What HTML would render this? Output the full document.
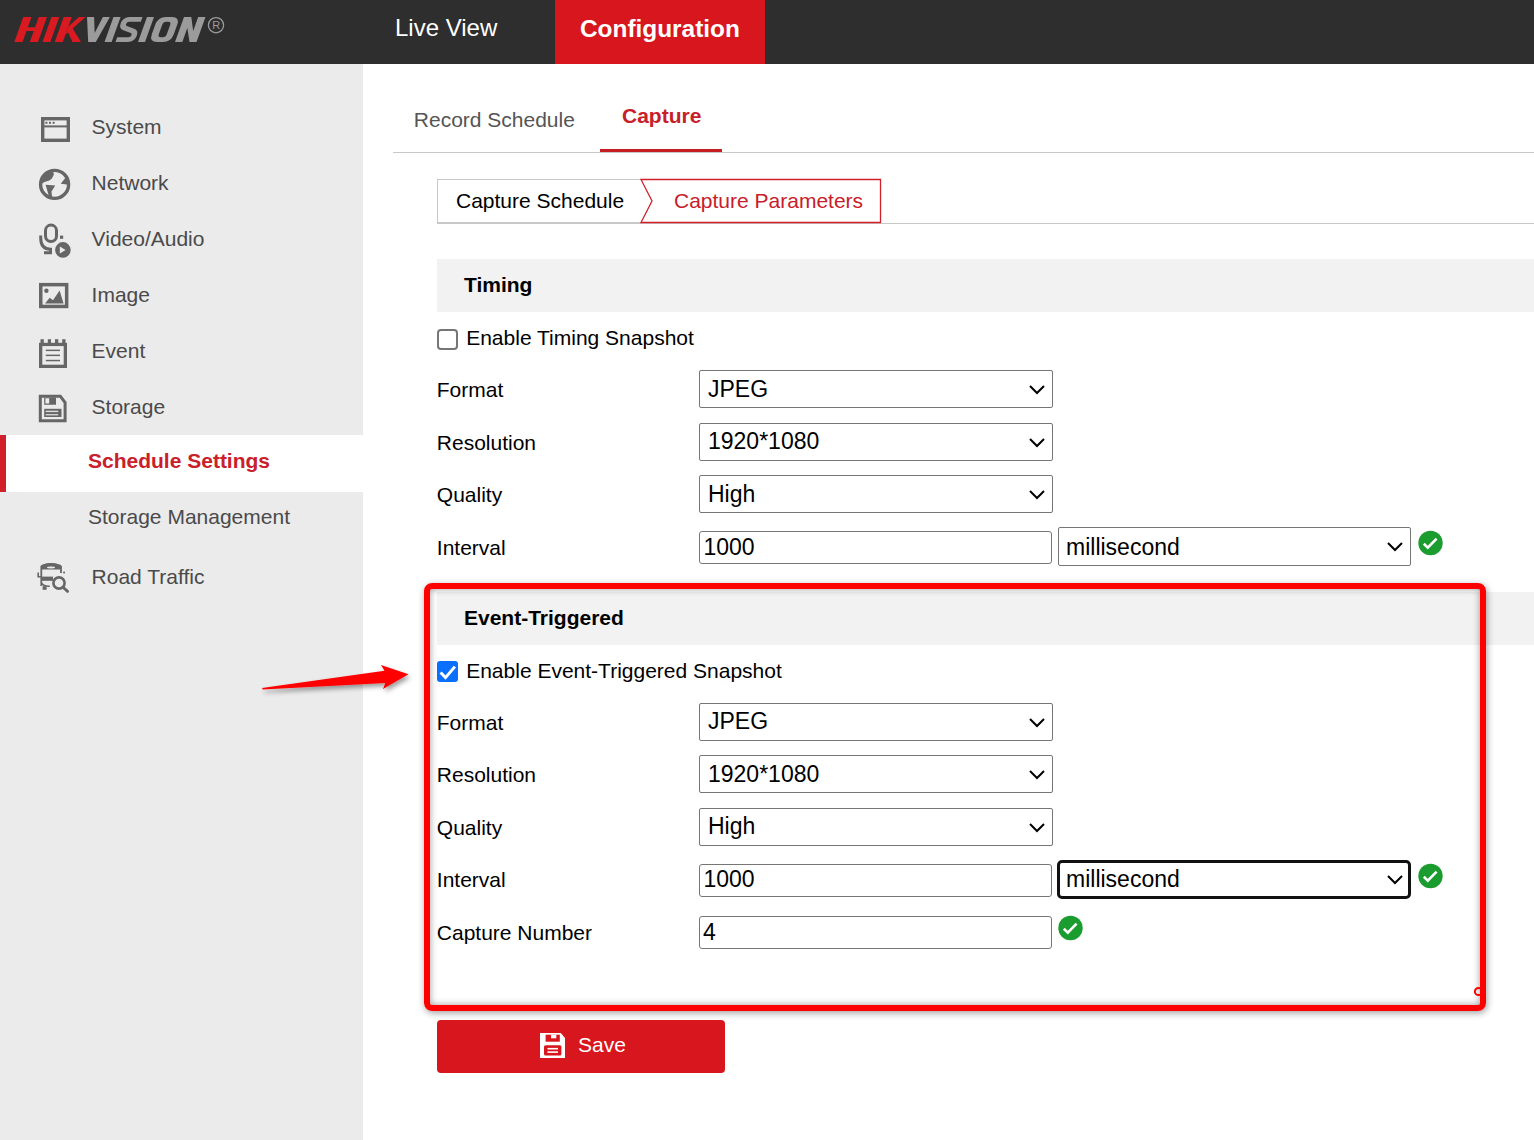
<!DOCTYPE html><html><head><meta charset="utf-8"><style>
html,body{margin:0;padding:0;}
body{width:1534px;height:1140px;overflow:hidden;position:relative;background:#fff;font-family:"Liberation Sans", sans-serif;}
.t{position:absolute;white-space:nowrap;line-height:1.117em;}
.r{position:absolute;box-sizing:border-box;}
svg{position:absolute;overflow:visible;}
</style></head><body>
<div class="r" style="left:0px;top:0px;width:1534px;height:64px;background:#2e2e2e"></div>
<div class="r" style="left:555px;top:0px;width:210px;height:64px;background:#d7161e"></div>
<svg style="left:0;top:0" width="240" height="64" viewBox="0 0 240 64">
<g transform="matrix(1 0 -0.36 1 15.12 0)">
<g fill="#da1a21">
<path d="M14.3,17 H22.5 V27.2 H29.8 V17 H38 V42 H29.8 V31 H22.5 V42 H14.3 Z"/>
<rect x="42.5" y="17" width="7.8" height="25"/>
<rect x="54.7" y="17" width="8.1" height="25"/>
<path d="M62.8,26.5 L69.8,17 L76.5,17 L67.8,28.5 L81,42 L72.4,42 L64.8,32.5 L62.8,34.5 Z"/>
</g>
<g fill="#9b9b9b">
<path d="M78,17 L85.1,17 L91.4,33 L93.9,17 L100.9,17 L95.8,42 L88.2,42 Z"/>
<rect x="104.5" y="17" width="7.1" height="25"/>
<path d="M133.5,17 L120.5,17 Q114,17 114,23.5 Q114,28.5 119,30.2 L127.5,33 Q129,33.6 129,35 Q129,37.3 126.5,37.3 L115.5,37.3 L115.5,42 L128,42 Q134.5,42 134.5,35.5 Q134.5,30.5 129.5,28.8 L121,26 Q119.6,25.5 119.6,24 Q119.6,21.7 122,21.7 L133.5,21.7 Z"/>
<rect x="138" y="17" width="7" height="25"/>
<path fill-rule="evenodd" d="M157,17 L163,17 Q171,17 171,25 L171,34 Q171,42 163,42 L157,42 Q149,42 149,34 L149,25 Q149,17 157,17 Z M159,21.7 Q156,21.7 156,25 L156,34 Q156,37.3 159,37.3 L161,37.3 Q164,37.3 164,34 L164,25 Q164,21.7 161,21.7 Z"/>
<path d="M175,17 L182.3,17 L189.2,31 L189.2,17 L196.5,17 L196.5,42 L189.5,42 L182.3,28 L182.3,42 L175,42 Z"/>
</g>
</g>
<circle cx="216" cy="25.2" r="7.6" fill="none" stroke="#9b9b9b" stroke-width="1.3"/>
<text x="216.2" y="29.3" font-family="Liberation Sans" font-size="11" fill="#9b9b9b" text-anchor="middle">R</text>
</svg>
<div class="t" style="left:395px;top:15.28px;font-size:24px;color:#fff;font-weight:normal;">Live View</div>
<div class="t" style="left:580px;top:14.92px;font-size:24.4px;color:#fff;font-weight:bold;">Configuration</div>
<div class="r" style="left:0px;top:64px;width:363px;height:1076px;background:#ebebeb"></div>
<div class="r" style="left:0px;top:435px;width:363px;height:57px;background:#fff"></div>
<div class="r" style="left:0px;top:435px;width:6px;height:57px;background:#d0202a"></div>
<div class="t" style="left:91.6px;top:115.00px;font-size:21px;color:#4a4a4a;font-weight:normal;">System</div>
<div class="t" style="left:91.6px;top:171.00px;font-size:21px;color:#4a4a4a;font-weight:normal;">Network</div>
<div class="t" style="left:91.6px;top:227.00px;font-size:21px;color:#4a4a4a;font-weight:normal;">Video/Audio</div>
<div class="t" style="left:91.6px;top:283.00px;font-size:21px;color:#4a4a4a;font-weight:normal;">Image</div>
<div class="t" style="left:91.6px;top:339.00px;font-size:21px;color:#4a4a4a;font-weight:normal;">Event</div>
<div class="t" style="left:91.6px;top:395.00px;font-size:21px;color:#4a4a4a;font-weight:normal;">Storage</div>
<div class="t" style="left:88px;top:448.50px;font-size:21px;color:#c9202a;font-weight:bold;">Schedule Settings</div>
<div class="t" style="left:88px;top:505.29px;font-size:21px;color:#4a4a4a;font-weight:normal;">Storage Management</div>
<div class="t" style="left:91.6px;top:565.00px;font-size:21px;color:#4a4a4a;font-weight:normal;">Road Traffic</div>
<svg style="left:0;top:0" width="100" height="620" viewBox="0 0 100 620">
<g fill="none" stroke="#666">
<rect x="42.7" y="118.7" width="25.6" height="21.6" stroke-width="3.4"/>
<line x1="44" y1="126.4" x2="67" y2="126.4" stroke-width="2"/>
</g>
<g fill="#666">
<rect x="45.4" y="121.8" width="2" height="2"/><rect x="49" y="121.8" width="2" height="2"/><rect x="52.6" y="121.8" width="2" height="2"/>
</g>
<!-- network globe -->
<circle cx="54.6" cy="184.4" r="14" fill="none" stroke="#666" stroke-width="3.4"/>
<g fill="#666">
<path d="M44,174 Q48,170.5 52.8,170.6 L53.9,174.5 L51.9,178.4 L49.3,180.6 L44.5,181.9 L41.2,184 L41,178 Z"/>
<path d="M45.6,184.8 L55.2,185.6 L51.4,191.8 L52.2,197 L49,196.6 Z"/>
<path d="M60.7,183.7 L65.1,178.2 L67.5,177.5 Q68.8,181 68.8,184.8 Z"/>
</g>
<!-- video/audio -->
<g fill="none" stroke="#666" stroke-width="3">
<rect x="45.5" y="225.1" width="11" height="16.4" rx="5.5"/>
<path d="M40.7,235.4 L40.7,238 Q40.7,249.2 50.5,249.2 L50.5,252.8 L44,252.8"/>
</g>
<rect x="60" y="235.6" width="3.2" height="3.2" fill="#666"/>
<circle cx="62.9" cy="249.9" r="8.6" fill="#666" stroke="#ebebeb" stroke-width="1.6"/>
<path d="M59.8,246.6 L59.8,253.4 L65.6,250 Z" fill="#ebebeb"/>
<!-- image -->
<rect x="40.75" y="284.65" width="25.9" height="21.8" fill="none" stroke="#666" stroke-width="3.5"/>
<circle cx="46.4" cy="290.8" r="2.2" fill="#666"/>
<path d="M45,303.6 L49.7,297.8 L53,300.2 L59.6,290.6 L63.6,303.6 Z" fill="#666"/>
<!-- event -->
<rect x="40.65" y="344.45" width="24.7" height="21.9" fill="none" stroke="#666" stroke-width="3.3"/>
<g fill="#666">
<rect x="40.5" y="339.2" width="3.3" height="4"/><rect x="47.8" y="339.2" width="3.2" height="4"/><rect x="55" y="339.2" width="3.3" height="4"/><rect x="62.2" y="339.2" width="3.3" height="4"/>
<rect x="45.8" y="349.6" width="14.2" height="1.5"/><rect x="45.8" y="354.6" width="14.2" height="1.5"/><rect x="45.8" y="359.8" width="14.2" height="1.5"/>
</g>
<!-- storage -->
<path d="M40.3,396.2 L60.3,396.2 L65.1,402.6 L65.1,420.7 L40.3,420.7 Z" fill="none" stroke="#666" stroke-width="3"/>
<path fill-rule="evenodd" fill="#666" d="M44.2,397.5 L56,397.5 L56,404.8 L44.2,404.8 Z M45.4,398.2 L45.4,403.6 L49.2,403.6 L49.2,398.2 Z"/>
<rect x="44.2" y="408.8" width="17.3" height="8.2" fill="#666"/>
<rect x="45.7" y="410.7" width="12.5" height="1.4" fill="#ddd"/>
<rect x="45.7" y="414.1" width="12.5" height="1.3" fill="#ddd"/>
<!-- road traffic -->
<g fill="none" stroke="#666">
<path d="M41.3,586 L41.3,566.5 Q51,561.5 61,566.5 L61,573" stroke-width="1.8"/>
<path d="M38.2,572.5 L38.2,576.8 L41.3,576.8" stroke-width="1.6"/>
<path d="M41.3,583 Q44,586.6 49.8,586.2" stroke-width="1.6"/>
<circle cx="59" cy="583" r="5.6" stroke-width="2.6"/>
<path d="M63,587.3 L67.6,591.4" stroke-width="2.8" stroke-linecap="round"/>
</g>
<g fill="#666">
<path d="M41.3,565 Q51,561 61,565 L61,569.6 L41.3,569.6 Z"/>
<rect x="42" y="576.6" width="11" height="4.2"/>
<rect x="42.6" y="586.2" width="4" height="3.6"/>
<rect x="63.2" y="571.6" width="1.8" height="1.8"/>
</g>
<ellipse cx="51" cy="567.5" rx="4" ry="0.9" fill="#ebebeb"/>
</svg>
<div class="t" style="left:413.8px;top:107.50px;font-size:21px;color:#555;font-weight:normal;">Record Schedule</div>
<div class="t" style="left:622px;top:104.00px;font-size:21px;color:#c8202a;font-weight:bold;">Capture</div>
<div class="r" style="left:393px;top:152px;width:1141px;height:1px;background:#c8c8c8"></div>
<div class="r" style="left:600px;top:149px;width:122px;height:3px;background:#c71d25"></div>
<div class="r" style="left:437px;top:223px;width:1097px;height:1px;background:#c8c8c8"></div>
<div class="r" style="left:437px;top:222px;width:205px;height:1px;background:#c8c8c8"></div>
<div class="r" style="left:437px;top:179px;width:205px;height:44px;border:1px solid #c8c8c8;border-right:none;border-bottom:none"></div>
<svg style="left:0;top:0" width="1534" height="300" viewBox="0 0 1534 300">
<path d="M641,179.5 L880.5,179.5 L880.5,222.5 L641,222.5 L652,201 Z" fill="#fff" stroke="#d0202a" stroke-width="1.3"/>
</svg>
<div class="t" style="left:456px;top:188.59px;font-size:21px;color:#000;font-weight:normal;">Capture Schedule</div>
<div class="t" style="left:674px;top:188.59px;font-size:21px;color:#c8202a;font-weight:normal;">Capture Parameters</div>
<div class="r" style="left:437px;top:259px;width:1097px;height:53px;background:#f2f2f2"></div>
<div class="t" style="left:464px;top:273.19px;font-size:21px;color:#000;font-weight:bold;">Timing</div>
<div class="r" style="left:437px;top:329px;width:21px;height:21px;border:2px solid #767676;border-radius:4px;background:#fff"></div>
<div class="t" style="left:466.2px;top:326.00px;font-size:21px;color:#000;font-weight:normal;">Enable Timing Snapshot</div>
<div class="t" style="left:436.8px;top:378.00px;font-size:21px;color:#000;font-weight:normal;">Format</div>
<div class="t" style="left:436.8px;top:430.69px;font-size:21px;color:#000;font-weight:normal;">Resolution</div>
<div class="t" style="left:436.8px;top:483.30px;font-size:21px;color:#000;font-weight:normal;">Quality</div>
<div class="t" style="left:436.8px;top:535.79px;font-size:21px;color:#000;font-weight:normal;">Interval</div>
<div class="r" style="left:699px;top:370px;width:354px;height:38px;border:1px solid #767676;border-radius:2px;background:#fff"></div>
<div class="t" style="left:708px;top:376.79px;font-size:23px;color:#000;font-weight:normal;">JPEG</div>
<svg style="left:1029px;top:385px" width="16" height="9" viewBox="0 0 16 9"><path d="M1,1 L8,8 L15,1" fill="none" stroke="#000" stroke-width="2"/></svg>
<div class="r" style="left:699px;top:422.5px;width:354px;height:38px;border:1px solid #767676;border-radius:2px;background:#fff"></div>
<div class="t" style="left:708px;top:429.29px;font-size:23px;color:#000;font-weight:normal;">1920*1080</div>
<svg style="left:1029px;top:437.5px" width="16" height="9" viewBox="0 0 16 9"><path d="M1,1 L8,8 L15,1" fill="none" stroke="#000" stroke-width="2"/></svg>
<div class="r" style="left:699px;top:475px;width:354px;height:38px;border:1px solid #767676;border-radius:2px;background:#fff"></div>
<div class="t" style="left:708px;top:481.79px;font-size:23px;color:#000;font-weight:normal;">High</div>
<svg style="left:1029px;top:490px" width="16" height="9" viewBox="0 0 16 9"><path d="M1,1 L8,8 L15,1" fill="none" stroke="#000" stroke-width="2"/></svg>
<div class="r" style="left:699px;top:531px;width:353px;height:33px;border:1px solid #767676;border-radius:3px;background:#fff"></div>
<div class="t" style="left:703.5px;top:534.78px;font-size:23px;color:#000;font-weight:normal;">1000</div>
<div class="r" style="left:1058px;top:527px;width:353px;height:39px;border:1px solid #767676;border-radius:2px;background:#fff"></div>
<div class="t" style="left:1066px;top:534.78px;font-size:23px;color:#000;font-weight:normal;">millisecond</div>
<svg style="left:1387px;top:542px" width="16" height="9" viewBox="0 0 16 9"><path d="M1,1 L8,8 L15,1" fill="none" stroke="#000" stroke-width="2"/></svg>
<svg style="left:1418px;top:531px" width="25" height="24" viewBox="0 0 25 24"><circle cx="12.5" cy="12" r="12.2" fill="#1a9c2e"/><path d="M5.8,12.8 L9.8,16.6 L18.6,7.6" fill="none" stroke="#fff" stroke-width="2.6"/></svg>
<div class="r" style="left:437px;top:591.5px;width:1097px;height:53px;background:#f2f2f2"></div>
<div class="t" style="left:464px;top:605.70px;font-size:21px;color:#000;font-weight:bold;">Event-Triggered</div>
<svg style="left:437px;top:661.0px" width="21" height="21" viewBox="0 0 21 21"><rect x="0" y="0" width="21" height="21" rx="3" fill="#0b6ffe"/><path d="M3.6,11.5 L8.5,16.6 L17.9,5.6" fill="none" stroke="#fff" stroke-width="3"/></svg>
<div class="t" style="left:466.2px;top:658.50px;font-size:21px;color:#000;font-weight:normal;">Enable Event-Triggered Snapshot</div>
<div class="t" style="left:436.8px;top:710.50px;font-size:21px;color:#000;font-weight:normal;">Format</div>
<div class="t" style="left:436.8px;top:763.20px;font-size:21px;color:#000;font-weight:normal;">Resolution</div>
<div class="t" style="left:436.8px;top:815.79px;font-size:21px;color:#000;font-weight:normal;">Quality</div>
<div class="t" style="left:436.8px;top:868.29px;font-size:21px;color:#000;font-weight:normal;">Interval</div>
<div class="r" style="left:699px;top:702.5px;width:354px;height:38px;border:1px solid #767676;border-radius:2px;background:#fff"></div>
<div class="t" style="left:708px;top:709.28px;font-size:23px;color:#000;font-weight:normal;">JPEG</div>
<svg style="left:1029px;top:717.5px" width="16" height="9" viewBox="0 0 16 9"><path d="M1,1 L8,8 L15,1" fill="none" stroke="#000" stroke-width="2"/></svg>
<div class="r" style="left:699px;top:755.0px;width:354px;height:38px;border:1px solid #767676;border-radius:2px;background:#fff"></div>
<div class="t" style="left:708px;top:761.78px;font-size:23px;color:#000;font-weight:normal;">1920*1080</div>
<svg style="left:1029px;top:770.0px" width="16" height="9" viewBox="0 0 16 9"><path d="M1,1 L8,8 L15,1" fill="none" stroke="#000" stroke-width="2"/></svg>
<div class="r" style="left:699px;top:807.5px;width:354px;height:38px;border:1px solid #767676;border-radius:2px;background:#fff"></div>
<div class="t" style="left:708px;top:814.28px;font-size:23px;color:#000;font-weight:normal;">High</div>
<svg style="left:1029px;top:822.5px" width="16" height="9" viewBox="0 0 16 9"><path d="M1,1 L8,8 L15,1" fill="none" stroke="#000" stroke-width="2"/></svg>
<div class="r" style="left:699px;top:863.5px;width:353px;height:33px;border:1px solid #767676;border-radius:3px;background:#fff"></div>
<div class="t" style="left:703.5px;top:867.28px;font-size:23px;color:#000;font-weight:normal;">1000</div>
<div class="r" style="left:1057px;top:859.5px;width:354px;height:39px;border:3px solid #111;border-radius:5px;background:#fff"></div>
<div class="t" style="left:1066px;top:867.28px;font-size:23px;color:#000;font-weight:normal;">millisecond</div>
<svg style="left:1387px;top:874.5px" width="16" height="9" viewBox="0 0 16 9"><path d="M1,1 L8,8 L15,1" fill="none" stroke="#000" stroke-width="2"/></svg>
<svg style="left:1418px;top:863.5px" width="25" height="24" viewBox="0 0 25 24"><circle cx="12.5" cy="12" r="12.2" fill="#1a9c2e"/><path d="M5.8,12.8 L9.8,16.6 L18.6,7.6" fill="none" stroke="#fff" stroke-width="2.6"/></svg>
<div class="t" style="left:436.8px;top:921.39px;font-size:21px;color:#000;font-weight:normal;">Capture Number</div>
<div class="r" style="left:699px;top:916px;width:353px;height:33px;border:1px solid #767676;border-radius:3px;background:#fff"></div>
<div class="t" style="left:703px;top:920.38px;font-size:23px;color:#000;font-weight:normal;">4</div>
<svg style="left:1058px;top:916px" width="25" height="24" viewBox="0 0 25 24"><circle cx="12.5" cy="12" r="12.2" fill="#1a9c2e"/><path d="M5.8,12.8 L9.8,16.6 L18.6,7.6" fill="none" stroke="#fff" stroke-width="2.6"/></svg>
<div class="r" style="left:424px;top:583px;width:1062px;height:428px;border:6px solid #ff0000;border-radius:8px;box-shadow:1px 2px 7px rgba(0,0,0,0.38), inset 0 0 7px rgba(0,0,0,0.4)"></div>
<svg style="left:0;top:0" width="1534" height="1140" viewBox="0 0 1534 1140"><circle cx="1478.5" cy="991.5" r="3.6" fill="none" stroke="#f00" stroke-width="2"/></svg>
<svg style="left:0;top:0" width="1534" height="1140" viewBox="0 0 1534 1140">
<defs><filter id="sh" x="-20%" y="-50%" width="140%" height="200%"><feGaussianBlur in="SourceAlpha" stdDeviation="2.5"/><feOffset dx="2" dy="3"/><feComponentTransfer><feFuncA type="linear" slope="0.4"/></feComponentTransfer><feMerge><feMergeNode/><feMergeNode in="SourceGraphic"/></feMerge></filter></defs>
<path filter="url(#sh)" d="M262,688 L384.5,670.8 L381,665 L408.5,674.2 L383,689 L385.3,683 L262.8,689.6 Z" fill="#ff0000"/>
</svg>
<div class="r" style="left:437px;top:1020px;width:288px;height:53px;background:#d7161e;border-radius:4px"></div>
<svg style="left:540px;top:1033px" width="25" height="25" viewBox="0 0 25 25">
<path d="M0,0 L20.7,0 L25,5 L25,25 L0,25 Z" fill="#fff"/>
<rect x="5.6" y="1.7" width="14.2" height="7" fill="#d7161e"/>
<rect x="11" y="1.7" width="5.3" height="3.6" fill="#fff"/>
<rect x="4" y="12.2" width="17.4" height="10.4" rx="1.5" fill="#d7161e"/>
<rect x="7.5" y="14.9" width="10.5" height="1.6" fill="#fff"/>
<rect x="7.5" y="18.3" width="10.5" height="1.6" fill="#fff"/>
</svg>
<div class="t" style="left:578px;top:1032.99px;font-size:21px;color:#fff;font-weight:normal;">Save</div>
</body></html>
